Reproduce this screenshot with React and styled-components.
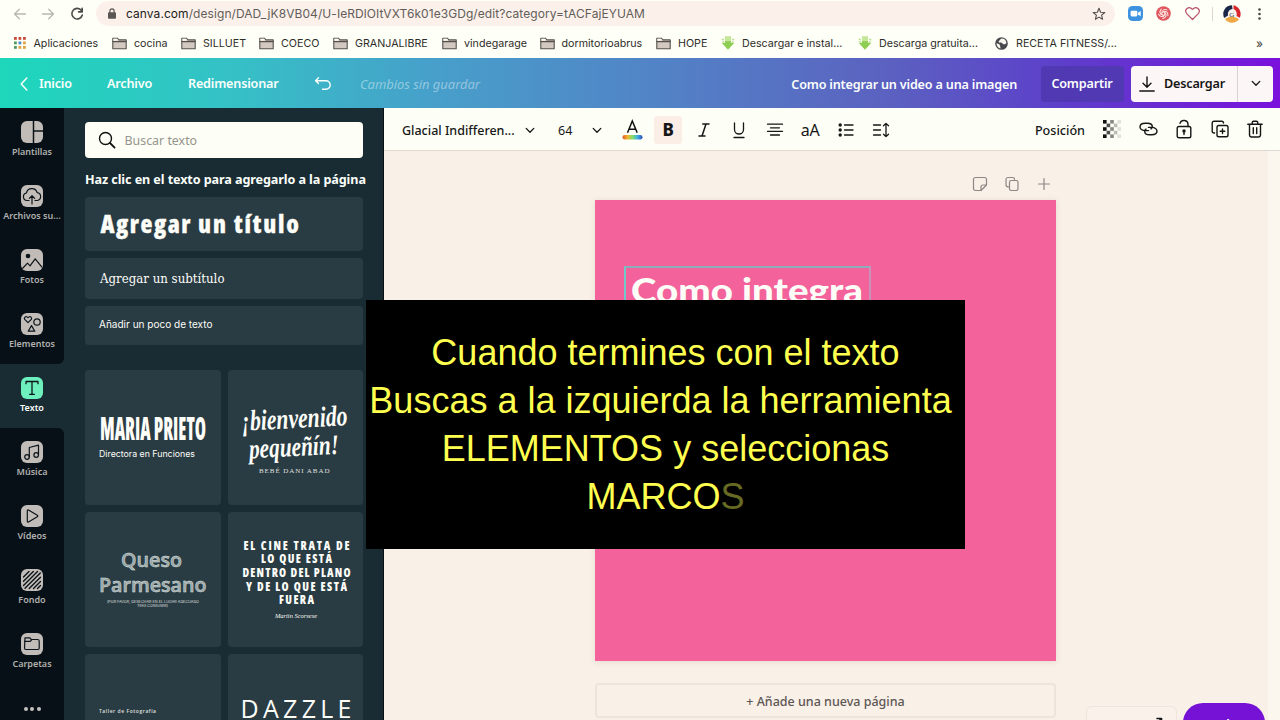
import React from 'react';
import styled, { createGlobalStyle, css } from 'styled-components';

const GlobalStyle = createGlobalStyle`
  * { box-sizing: border-box; }
  html, body { margin: 0; padding: 0; overflow: hidden; }
  body { font-family: 'Noto Sans', 'Open Sans', sans-serif; }
  svg { display: block; flex: none; overflow: visible; }
`;

const bookmarks = [
  { label: 'cocina', width: 69 },
  { label: 'SILLUET', width: 78 },
  { label: 'COECO', width: 74 },
  { label: 'GRANJALIBRE', width: 109 },
  { label: 'vindegarage', width: 97.5 },
  { label: 'dormitorioabrus', width: 116.5 },
  { label: 'HOPE', width: 65 },
];

const railItems = [
  { label: 'Plantillas', icon: 'templates' },
  { label: 'Archivos su...', icon: 'upload' },
  { label: 'Fotos', icon: 'photo' },
  { label: 'Elementos', icon: 'elements' },
  { label: 'Texto', icon: 'text', active: true },
  { label: 'Música', icon: 'music' },
  { label: 'Vídeos', icon: 'video' },
  { label: 'Fondo', icon: 'background' },
  { label: 'Carpetas', icon: 'folder' },
];

const quote = [
  ['EL CINE TRATA DE', 15.5, 106],
  ['LO QUE ESTÁ', 33, 71],
  ['DENTRO DEL PLANO', 14.5, 108],
  ['Y DE LO QUE ESTÁ', 18, 101],
  ['FUERA', 51, 35],
];

const Line = ({ size = 22, w, h, sw = 1.4, color = 'currentColor', children }) => (
  <svg width={w || size} height={h || size} viewBox={`0 0 ${w || size} ${h || size}`} fill="none" stroke={color} strokeWidth={sw} strokeLinecap="round" strokeLinejoin="round">
    {children}
  </svg>
);

const FolderIcon = () => (
  <Line w={15} h={13} sw={1.1} color="#55504c">
    <path d="M.8 11.8V1.2h4.6l1.3 1.7h7.5v8.9z" fill="#d3c9c1" />
    <path d="M.8 4.6h13.4" />
    <path d="M1.4 3.8V1.8h3.7l1.3 1.7" fill="#fdfdf4" stroke="none" />
  </Line>
);

const ArrowDown = () => (
  <svg width="14" height="16" viewBox="0 0 14 16">
    <path d="M4 2.200h6v5.600h3.400L7 14.800.6 7.800H4z" fill="#8fce52" />
    <path d="M4 1.200h6v5H4z" fill="#c4e79a" />
    <path d="M.8 4.500h2M11.200 4.500h2M1.500 6.600h1.500M11 6.600h1.500" stroke="#b5e088" strokeWidth="1.300" />
  </svg>
);

const Chevron = () => (
  <Line w={10} h={7} sw={1.3}>
    <path d="M1.200 1.400 5 5.300l3.800-3.900" />
  </Line>
);

const RailIcon = ({ name }) => {
  const shapes = {
    templates: <path d="M12.500-1v24M12.500 10h11" strokeWidth="1.500" />,
    upload: (
      <>
        <path d="M8 15.500H6a3.800 3.800 0 0 1-.6-7.500 5.600 5.600 0 0 1 10.800-.4A4 4 0 0 1 16.300 15.500H14" />
        <path d="M11 19v-8M8.300 13.300 11 10.600l2.700 2.700" />
      </>
    ),
    photo: (
      <>
        <circle cx="7" cy="7" r="1.700" fill="#0c141a" />
        <path d="m1.500 19.500 5-5.300 2.500 2.600 5.200-7 6.500 8" />
      </>
    ),
    elements: (
      <>
        <path d="M7 9.700 3.700 6.400a1.700 1.700 0 0 1 .3-2.300c1-.8 2.300-.4 3 .6.700-1 2-1.400 3-.6a1.700 1.700 0 0 1 .3 2.300z" />
        <circle cx="16" cy="9" r="3.200" />
        <path d="m10.500 12.600 3.300 5.600H7.200z" />
      </>
    ),
    text: <path d="M5 6.700V4.500h12v2.200M11 4.500v12.700M8.600 17.300h4.800" strokeWidth="1.300" />,
    music: (
      <>
        <circle cx="6" cy="16" r="2.300" />
        <circle cx="15.200" cy="14" r="2.300" />
        <path d="M8.300 16V6.500l9.200-2.300V14" />
      </>
    ),
    video: <path d="M6.300 5.700c0-.7.6-1 1.200-.7l8.800 5.300c.6.400.6 1 0 1.400l-8.800 5.300c-.6.300-1.200 0-1.200-.7z" />,
    background: <path d="M2.500 8 8 2.500M2.500 12.300l9.800-9.800M2.500 16.500l14-14M4 19.300 19.300 4M8.200 19.500 19.500 8.200M12.500 19.500l7-7M16.500 19.500l3-3" strokeWidth="1.400" />,
    folder: (
      <>
        <path d="M4 4.800h4.800l1.500 1.700h6.200c1 0 1.700.6 1.700 1.500v7.300c0 .7-.5 1.200-1.200 1.200H4.800c-.8 0-1.300-.5-1.300-1.200z" />
        <path d="M3.500 8.300h5.800l1.300-1.500" />
      </>
    ),
  };

  return (
    <Line color="#0c141a" sw={1.200}>
      {shapes[name]}
    </Line>
  );
};

// Text as it appears inside a design, stretched to the width of its box
const Art = ({ x, y, w, size, children, ...rest }) => (
  <text x={x} y={y} textLength={w} lengthAdjust="spacingAndGlyphs" fontSize={size} fill="#fdfdf8" {...rest}>
    {children}
  </text>
);

const Browser = () => (
  <Chrome>
    <AddressRow>
      <NavIcons>
        <Line size={14} sw={1.300} color="#b9b7b3"><path d="M12.500 7H1.500M6.300 2.200 1.500 7l4.800 4.800" /></Line>
        <Line size={14} sw={1.300} color="#b9b7b3"><path d="M1.500 7h11M7.700 2.200 12.500 7l-4.800 4.800" /></Line>
        <Line size={14} sw={1.600} color="#4b4a48"><path d="M11.500 3.600A5.300 5.300 0 1 0 12.300 8M12.200 1.300v3.600H8.600" /></Line>
      </NavIcons>
      <AddressBar>
        <svg width="8" height="11" viewBox="0 0 8 11"><rect y="4.200" width="8" height="6.500" rx="1" fill="#5a5653" /><path d="M1.900 5V3a2.100 2.100 0 0 1 4.200 0v2" fill="none" stroke="#5a5653" strokeWidth="1.200" /></svg>
        <Url><b>canva.com</b>/design/DAD_jK8VB04/U-IeRDlOItVXT6k01e3GDg/edit?category=tACFajEYUAM</Url>
        <Line size={14} sw={1.100} color="#504d4a"><path d="m7 1.300 1.600 3.900 4.200.3-3.200 2.700 1 4.100L7 10.100l-3.600 2.200 1-4.100L1.200 5.500l4.200-.3z" /></Line>
      </AddressBar>
      <Extensions>
        <svg width="15" height="15" viewBox="0 0 15 15"><rect width="15" height="15" rx="4.500" fill="#3d93e0" /><rect x="2.600" y="4.700" width="6.800" height="5.700" rx="1.300" fill="#fff" /><path d="m10 6.700 2.700-1.800v5.300L10 8.400z" fill="#fff" /></svg>
        <Line size={15} sw={1} color="#fff0ec">
          <circle cx="7.500" cy="7.500" r="7.300" fill="#e0575f" stroke="none" />
          <circle cx="7.500" cy="7.500" r="1.700" />
          {[0, 72, 144, 216, 288].map((angle) => (
            <path key={angle} d="M5.800 7C5.600 4.200 8 2.600 11 4" transform={`rotate(${angle} 7.5 7.5)`} />
          ))}
        </Line>
        <Line size={15} sw={1.200} color="#b8506f"><path d="M7.500 13.500 1.700 7.600c-3-3.600 2-8.500 5.800-4.200 3.800-4.300 8.800.6 5.800 4.200z" /></Line>
        <Separator />
        <svg width="18" height="18" viewBox="0 0 18 18">
          <circle cx="9" cy="9" r="8.800" fill="#f8f2ee" />
          <path d="M9 .2A8.800 8.800 0 0 0 1.200 13L5 10.500C4.500 7 6 4.500 9.500 4z" fill="#1c2748" />
          <path d="M10.500.300a8.800 8.800 0 0 1 6.300 12.400L13.500 11c1-3-.5-6-3-7z" fill="#d9262c" />
          <path d="M2 14.200c4-3.500 10-3.200 14 0A8.800 8.800 0 0 1 2 14.200z" fill="#f0a844" />
          <text x="6.300" y="11.500" fontSize="7" fontFamily="Liberation Serif, serif" fill="#333">G</text>
        </svg>
        <svg width="10" height="14" viewBox="0 0 10 14" fill="#4a4846"><circle cx="5.500" cy="2.500" r="1.300" /><circle cx="5.500" cy="7" r="1.300" /><circle cx="5.500" cy="11.500" r="1.300" /></svg>
      </Extensions>
    </AddressRow>
    <BookmarkRow>
      <Bookmark $w={78.500} $gap={8}>
        <svg width="12" height="12" viewBox="0 0 12 12">
          {['#c84c3c', '#c84c3c', '#c84c3c', '#4f9b62', '#4b86c9', '#e0a144', '#4f9b62', '#e0a144', '#e0a144'].map((color, i) => (
            <rect key={i} x={(i % 3) * 4.500} y={Math.floor(i / 3) * 4.500} width="2.800" height="2.800" fill={color} />
          ))}
        </svg>
        Aplicaciones
      </Bookmark>
      {bookmarks.map((item) => (
        <Bookmark key={item.label} $w={item.width}><FolderIcon />{item.label}</Bookmark>
      ))}
      <Bookmark $w={137}><ArrowDown />Descargar e instal...</Bookmark>
      <Bookmark $w={137}><ArrowDown />Descarga gratuita...</Bookmark>
      <Bookmark $w={140}>
        <svg width="14" height="13" viewBox="0 0 14 13"><circle cx="6.500" cy="6.500" r="6.300" fill="#46484b" /><path d="M7 1.500c-2 .2-1.500 1.700-3 2.200C3 4.200 4 6 5.500 5.600c2-.4 1.700 1.500 3 1.700 1.200.2 2.300-.3 3-1.300-.2-2.500-2-4.500-4.500-4.500zM1.500 6.500c1.500 0 3 .6 3.500 2 .3 1 .5 2 .5 3-2.300-.4-4-2.400-4-5z" fill="#f7f6ee" /></svg>
        RECETA FITNESS/...
      </Bookmark>
      <More>»</More>
    </BookmarkRow>
  </Chrome>
);

const Header = () => (
  <HeaderBar>
    <HeaderItem $w={87}>
      <Line w={8} h={14} sw={1.500}><path d="M6.800 1 1.200 7l5.600 6" /></Line>
      <span>Inicio</span>
    </HeaderItem>
    <HeaderItem $w={81}>Archivo</HeaderItem>
    <HeaderItem $w={126}>Redimensionar</HeaderItem>
    <HeaderItem $w={46}>
      <Line w={18} h={16} sw={1.400}><path d="M4.500 1.800 1.600 4.700l2.900 2.900M1.900 4.700h10a4.300 4.300 0 0 1 0 8.600H8.500" /></Line>
    </HeaderItem>
    <SaveState>Cambios sin guardar</SaveState>
    <DocTitle>Como integrar un video a una imagen</DocTitle>
    <ShareButton>Compartir</ShareButton>
    <DownloadGroup>
      <DownloadButton>
        <Line w={16} h={16} sw={1.400}><path d="M8 1v10M4 7.200l4 4 4-4M.8 15h14.400" /></Line>
        Descargar
      </DownloadButton>
      <DownloadMore><Chevron /></DownloadMore>
    </DownloadGroup>
  </HeaderBar>
);

const Sidebar = () => (
  <Rail>
    {railItems.map((item) => (
      <RailItem
        key={item.label}
        $active={item.active}
        $before={item.label === 'Elementos'}
        $after={item.label === 'Música'}
      >
        <RailTile $active={item.active}><RailIcon name={item.icon} /></RailTile>
        {item.label}
      </RailItem>
    ))}
    <RailMore><i /><i /><i /></RailMore>
  </Rail>
);

const TextPanel = () => (
  <Panel>
    <SearchBox>
      <Line size={18} sw={1.400} color="#111"><circle cx="7.500" cy="7.500" r="6" /><path d="m12 12 4.600 4.600" strokeWidth="1.800" /></Line>
      Buscar texto
    </SearchBox>
    <PanelTitle>Haz clic en el texto para agregarlo a la página</PanelTitle>
    <Preset $h={54}>
      <svg width="278" height="54" fontFamily="'Open Sans'" fontWeight="800" stroke="#fdfdf8" strokeWidth="0.3">
        <Art x={15.500} y={35.500} w={90} size={24.500} lengthAdjust="spacing" fontStretch="75%">Agregar</Art>
        <Art x={113} y={35.500} w={28} size={24.500} lengthAdjust="spacing" fontStretch="75%">un</Art>
        <Art x={149} y={35.500} w={65} size={24.500} lengthAdjust="spacing" fontStretch="75%">título</Art>
      </svg>
    </Preset>
    <Preset $h={41}>
      <svg width="278" height="41"><Art x={15} y={25} w={124.500} size={12.500} fontFamily="'DejaVu Serif'">Agregar un subtítulo</Art></svg>
    </Preset>
    <Preset $h={39}>
      <svg width="278" height="39"><Art x={14} y={22} w={113.500} size={10.400} fontFamily="Inter">Añadir un poco de texto</Art></svg>
    </Preset>
    <TemplateGrid>
      <Template>
        <svg width="135" height="135">
          <Art x={15} y={69.500} w={106} size={31} fontFamily="'Open Sans'" fontWeight="800" fontStretch="75%">MARIA PRIETO</Art>
          <Art x={14} y={87} w={96} size={8.500} fontFamily="Inter">Directora en Funciones</Art>
        </svg>
      </Template>
      <Template>
        <svg width="135" height="135">
          <g transform="rotate(-3 67 60)" fontFamily="'Liberation Serif'" fontStyle="italic" fontWeight="700">
            <Art x={14} y={58} w={106} size={29}>¡bienvenido</Art>
            <Art x={20} y={86} w={90} size={28}>pequeñín!</Art>
          </g>
          <Art x={31} y={103} w={70.500} size={7} lengthAdjust="spacing" fontFamily="'Liberation Serif'" opacity="0.85">BEBÉ DANI ABAD</Art>
        </svg>
      </Template>
      <Template>
        <svg width="135" height="135">
          <g fontFamily="'Open Sans'" fontWeight="600" fill="#98a2a3" stroke="#dfe4e2" strokeWidth="0.5">
            <Art x={36} y={54.500} w={61} size={20.500} fill="inherit">Queso</Art>
            <Art x={14} y={80} w={107.500} size={20.500} fill="inherit">Parmesano</Art>
          </g>
          <Art x={22} y={90.500} w={92} size={3.800} fontFamily="Inter" opacity="0.8">(POR FAVOR, DESECHAR EN EL LUGAR ADECUADO</Art>
          <Art x={52} y={95} w={31} size={3.800} fontFamily="Inter" opacity="0.8">TRAS CONSUMIR)</Art>
        </svg>
      </Template>
      <Template>
        <svg width="135" height="135">
          {quote.map(([line, x, w], i) => (
            <Art key={line} x={x} y={37.500 + i * 13.700} w={w} size={11.400} lengthAdjust="spacing" fontFamily="'Open Sans'" fontWeight="800" fontStretch="75%">{line}</Art>
          ))}
          <Art x={47} y={105.500} w={42} size={5.600} fontFamily="'Liberation Serif'" fontStyle="italic">Martin Scorsese</Art>
        </svg>
      </Template>
      <Template>
        <svg width="135" height="135"><Art x={14} y={59} w={57} size={5} lengthAdjust="spacing" fontFamily="'Open Sans'" fontWeight="600" opacity="0.85">Taller de Fotografía</Art></svg>
      </Template>
      <Template>
        <svg width="135" height="135"><Art x={12.500} y={64} w={111} size={25} lengthAdjust="spacing" fontFamily="'Open Sans'" fontStretch="90%">DAZZLE</Art></svg>
      </Template>
    </TemplateGrid>
  </Panel>
);

const EditorToolbar = () => (
  <Toolbar>
    <FontName>Glacial Indifferen...</FontName>
    <ToolCell $w={28}><Chevron /></ToolCell>
    <FontSize>64</FontSize>
    <ToolCell $w={36}><Chevron /></ToolCell>
    <ToolCell>
      <svg width="21" height="20" viewBox="0 0 21 20">
        <defs>
          <linearGradient id="rainbow">
            <stop offset="0" stopColor="#e2572e" /><stop offset="0.25" stopColor="#f1b62c" />
            <stop offset="0.5" stopColor="#83dd6e" /><stop offset="0.75" stopColor="#3fb0e6" /><stop offset="1" stopColor="#3450b4" />
          </linearGradient>
        </defs>
        <path d="M5.500 12.800 10.300 1l4.900 11.800M7 9.200h6.600" fill="none" stroke="#111" strokeWidth="1.500" />
        <rect x="0.500" y="15" width="20" height="4.500" rx="2.200" fill="url(#rainbow)" />
      </svg>
    </ToolCell>
    <ToolCell><BoldButton>B</BoldButton></ToolCell>
    <ToolCell><Line w={12} h={16} sw={1.500}><path d="M4.800 2H11M1 14h6M8 2 4 14" /></Line></ToolCell>
    <ToolCell><Line w={14} h={18} sw={1.300}><path d="M2.500 2v6.500a4.500 4.500 0 0 0 9 0V2M2 16.500h10" /></Line></ToolCell>
    <ToolCell><Line w={18} h={14} sw={1.300}><path d="M1.500 1.200h15M4.500 4.800h9M1.500 8.400h15M4.500 12h9" /></Line></ToolCell>
    <ToolCell><CaseLabel>aA</CaseLabel></ToolCell>
    <ToolCell>
      <Line w={16} h={16} sw={1.300}>
        <path d="M6.500 3H15M6.500 8H15M6.500 13H15" />
        <g fill="currentColor" stroke="none"><circle cx="2.200" cy="3" r="1.700" /><circle cx="2.200" cy="8" r="1.700" /><circle cx="2.200" cy="13" r="1.700" /></g>
      </Line>
    </ToolCell>
    <ToolCell><Line w={18} h={16} sw={1.300}><path d="M1.500 3h7M1.500 8h7M1.500 13h7M14 1.500v13M11.500 3.800 14 1.400l2.500 2.400M11.500 12.200l2.500 2.400 2.500-2.400" /></Line></ToolCell>
    <PositionLabel>Posición</PositionLabel>
    <ObjectTools>
      <ToolCell $w={36}>
        <svg width="18" height="18" viewBox="0 0 18 18">
          {[0, 1, 2, 3, 4].map((row) => [0, 1, 2, 3, 4].map((col) => (
            (row + col) % 2 === 0 && <rect key={`${row}-${col}`} x={col * 3.600} y={row * 3.600} width="3.600" height="3.600" fill="#111" opacity={[1, 0.75, 0.5, 0.28, 0.12][col]} />
          )))}
        </svg>
      </ToolCell>
      <ToolCell $w={36}>
        <Line w={19} h={14} sw={1.400}>
          <path d="M9.500 8.600H6.300C3.200 8.600 1 7 1 4.900s2.200-3.700 5.300-3.700h2c2.800 0 5 1.400 5 3.400 0 .9-.5 1.700-1.300 2.300" />
          <path d="M9.500 8.600H6.300C3.200 8.600 1 7 1 4.900s2.200-3.700 5.300-3.700h2c2.800 0 5 1.400 5 3.400 0 .9-.5 1.700-1.300 2.300" transform="rotate(180 9.5 7)" />
        </Line>
      </ToolCell>
      <ToolCell $w={36}><Line w={16} h={20} sw={1.400}><rect x="1.200" y="7.500" width="13.600" height="11.200" rx="1.800" /><path d="M4 4.300a4.100 4.100 0 0 1 8 1.400v1.800M8 13v2.500" /><circle cx="8" cy="12" r="1" fill="currentColor" /></Line></ToolCell>
      <ToolCell $w={35}><Line w={18} h={18} sw={1.400}><path d="M3.600 13H3a1.800 1.800 0 0 1-1.800-1.800V3A1.800 1.800 0 0 1 3 1.200h7.700A1.800 1.800 0 0 1 12.500 3" /><rect x="6" y="5.500" width="11" height="11.300" rx="1.800" /><path d="M11.500 8.900v4.600M9.200 11.200h4.600" /></Line></ToolCell>
      <ToolCell $w={36}><Line w={16} h={18} sw={1.400}><path d="M.8 4.200h14.400M5.200 4V2.800c0-1 .6-1.600 1.500-1.600h2.600c.9 0 1.500.6 1.500 1.600V4M2.500 4.500v10.300c0 1.300.9 2.200 2.200 2.200h6.600c1.300 0 2.200-.9 2.200-2.200V4.500M6.300 7.800v5.700M9.700 7.800v5.700" /></Line></ToolCell>
    </ObjectTools>
  </Toolbar>
);

const Workspace = () => (
  <Stage>
    <PageColumn>
      <PageActions>
        <Line size={16} sw={1.200}><path d="M9 14.500H3.500c-1.200 0-2-.8-2-2v-9c0-1.200.8-2 2-2h9c1.200 0 2 .8 2 2V9L9 14.500V11c0-1.200.8-2 2-2h3.500" /></Line>
        <Line size={16} sw={1.200}><path d="M4.500 10.800H4c-1.200 0-2-.8-2-2V3.500c0-1.200.8-2 2-2h4.500c1.200 0 2 .7 2 1.800" /><rect x="5.500" y="4.500" width="8.500" height="10" rx="1.700" /></Line>
        <Line size={16} sw={1.200}><path d="M8 2.500v11M2.500 8h11" /></Line>
      </PageActions>
      <Page>
        <TextSelection>
          <svg width="240" height="60">
            <Art x={5} y={34.500} w={232} size={35} fontFamily="Lato" fontWeight="900">Como integra</Art>
          </svg>
        </TextSelection>
      </Page>
      <AddPage>+ Añade una nueva página</AddPage>
    </PageColumn>
    <ScrollTrack />
    <ZoomBox>
      <span>29 %</span>
      <Line size={12} sw={1.600}><path d="M6 1.500h4.500V6M10.500 1.500 1.500 10.500M1.500 6v4.500H6" /></Line>
    </ZoomBox>
    <HelpPill>Ayuda <b>?</b></HelpPill>
  </Stage>
);

const App = () => (
  <Window>
    <GlobalStyle />
    <Browser />
    <Header />
    <Body>
      <Sidebar />
      <TextPanel />
      <Editor>
        <EditorToolbar />
        <Workspace />
      </Editor>
    </Body>
    <Caption>
      <p>Cuando termines con el texto</p>
      <CaptionLine>Buscas a la izquierda la herramienta</CaptionLine>
      <p>ELEMENTOS y seleccionas</p>
      <p>MARCO<span>S</span></p>
    </Caption>
  </Window>
);

const Window = styled.div`
  position: relative;
  display: flex;
  flex-direction: column;
  width: 1280px;
  height: 720px;
  overflow: hidden;
  white-space: nowrap;
  background: #fefff6;
`;

const Chrome = styled.div`
  height: 58px;
  font-family: Inter, 'Liberation Sans', sans-serif;
  color: #3a3937;
`;

const AddressRow = styled.div`
  display: flex;
  align-items: center;
  height: 27px;
`;

const NavIcons = styled.div`
  display: flex;
  gap: 14.5px;
  width: 96px;
  padding-left: 12.5px;
`;

const AddressBar = styled.div`
  display: flex;
  align-items: center;
  width: 1019px;
  height: 25px;
  padding: 0 9px 0 12px;
  border-radius: 13px;
  background: #fcf1ea;
`;

const Url = styled.span`
  flex: 1;
  margin-left: 10px;
  font-size: 12px;
  letter-spacing: 0.07px;
  color: #625d5a;

  b {
    font-weight: 400;
    color: #1c1b1a;
  }
`;

const Extensions = styled.div`
  display: flex;
  align-items: center;
  padding-left: 12.5px;
  gap: 13.5px;
`;

const Separator = styled.i`
  width: 1px;
  height: 14px;
  margin: 0 -4px 0 -1px;
  background: #dcd5cf;
`;

const BookmarkRow = styled.div`
  display: flex;
  align-items: center;
  height: 31px;
  padding: 1px 17px 0 13.5px;
`;

const Bookmark = styled.div`
  display: flex;
  flex: none;
  align-items: center;
  gap: ${({ $gap }) => $gap || 7}px;
  width: ${({ $w }) => $w}px;
  margin-right: ${({ $gap }) => ($gap ? 20 : 0)}px;
  font-size: 10.7px;
  color: #2e2d2b;
`;

const More = styled.span`
  margin-left: auto;
  font-size: 12px;
`;

const HeaderBar = styled.header`
  display: flex;
  align-items: center;
  height: 50px;
  padding: 1px 7px 0 20px;
  color: #fbfffc;
  font-size: 12.6px;
  font-weight: 600;
  letter-spacing: -0.18px;
  background: linear-gradient(90deg, #1dd7bb 0%, #35c1c6 18%, #479fca 34%, #5282c6 52%, #5b62c0 69%, #5d3fca 83%, #7a11dc 100%);
`;

const HeaderItem = styled.div`
  display: flex;
  flex: none;
  align-items: center;
  gap: 11px;
  width: ${({ $w }) => $w}px;
`;

const SaveState = styled.span`
  flex: 1;
  font-size: 13px;
  font-weight: 400;
  font-style: italic;
  letter-spacing: -0.05px;
  color: rgba(255, 255, 255, 0.42);
`;

const DocTitle = styled.span`
  margin-right: 24px;
  padding-top: 2px;
`;

const ShareButton = styled.div`
  display: flex;
  align-items: center;
  justify-content: center;
  width: 83px;
  height: 36px;
  margin-right: 7px;
  padding-right: 1px;
  border-radius: 4px;
  background: #5239b4;
`;

const DownloadGroup = styled.div`
  display: flex;
  width: 142px;
  height: 36px;
  border-radius: 4px;
  overflow: hidden;
  color: #151515;
  background: #fcf6f6;
`;

const DownloadButton = styled.div`
  display: flex;
  align-items: center;
  gap: 9px;
  width: 107px;
  padding-left: 8px;
  border-right: 1px solid #d9d1d3;
`;

const DownloadMore = styled.div`
  display: flex;
  flex: 1;
  align-items: center;
  justify-content: center;
`;

const Body = styled.div`
  display: flex;
  flex: 1;
  min-height: 0;
`;

const Rail = styled.nav`
  width: 64px;
  height: 612px;
  overflow: hidden;
  background: #192b33;
`;

const RailItem = styled.div`
  display: flex;
  flex-direction: column;
  align-items: center;
  gap: 1.5px;
  height: 64px;
  padding-top: 13px;
  font-size: 9px;
  line-height: 14px;
  font-weight: 600;
  color: ${({ $active }) => ($active ? '#fafffa' : '#b0b1ae')};
  background: ${({ $active }) => ($active ? '#192b33' : '#081017')};
  ${({ $before }) => $before && css`border-bottom-right-radius: 6px;`}
  ${({ $after }) => $after && css`border-top-right-radius: 6px;`}
`;

const RailTile = styled.div`
  width: 22px;
  height: 22px;
  border-radius: 6px;
  overflow: hidden;
  background: ${({ $active }) => ($active ? '#6df0bd' : '#c1bcb7')};
`;

const RailMore = styled.div`
  display: flex;
  justify-content: center;
  gap: 2.5px;
  height: 40px;
  padding-top: 22.5px;
  background: #081017;

  i {
    width: 4px;
    height: 4px;
    border-radius: 50%;
    background: #c3c1bd;
  }
`;

const Panel = styled.aside`
  width: 320px;
  height: 612px;
  padding: 14px 20px 0 21px;
  border-right: 1px solid #0a0f12;
  overflow: hidden;
  background: #192b33;
`;

const SearchBox = styled.div`
  display: flex;
  align-items: center;
  gap: 9px;
  height: 36px;
  padding-left: 12.5px;
  border-radius: 4px;
  font-size: 12.4px;
  color: #96948e;
  background: #fdfef5;
`;

const PanelTitle = styled.div`
  height: 39px;
  line-height: 43px;
  font-size: 12.6px;
  font-weight: 700;
  letter-spacing: -0.09px;
  color: #fbfffa;
`;

const Preset = styled.div`
  height: ${({ $h }) => $h}px;
  margin-bottom: 7px;
  border-radius: 4px;
  background: #293b43;
`;

const TemplateGrid = styled.div`
  display: grid;
  grid-template-columns: 135.5px 135.5px;
  grid-auto-rows: 135px;
  gap: 7px;
  margin-top: 25px;
`;

const Template = styled.div`
  border-radius: 4px;
  background: #293b43;
`;

const Editor = styled.main`
  display: flex;
  flex: 1;
  flex-direction: column;
`;

const Toolbar = styled.div`
  display: flex;
  align-items: center;
  height: 43px;
  padding: 2px 7px 0 18px;
  border-bottom: 1px solid #e0d9d2;
  font-size: 13px;
  color: #161616;
  background: #fdfff6;
`;

const ToolCell = styled.div`
  display: flex;
  flex: none;
  align-items: center;
  justify-content: center;
  width: ${({ $w }) => $w || 35.5}px;
`;

const ObjectTools = styled.div`
  display: flex;
  align-items: center;
  padding-bottom: 2px;
`;

const FontName = styled.span`
  width: 114px;
  font-size: 12.5px;
  font-weight: 500;
`;

const FontSize = styled.span`
  width: 35px;
  padding-left: 14px;
  font-size: 12.5px;
`;

const BoldButton = styled.div`
  width: 28px;
  height: 28px;
  border-radius: 3px;
  line-height: 28px;
  text-align: center;
  font-size: 17px;
  font-weight: 800;
  background: #faeee7;
`;

const CaseLabel = styled.span`
  font-size: 16px;
`;

const PositionLabel = styled.span`
  margin-left: auto;
  margin-right: 9px;
  font-size: 12.6px;
  font-weight: 500;
`;

const Stage = styled.section`
  position: relative;
  display: flex;
  flex: 1;
  background: #f9f0e8;
`;

const PageColumn = styled.div`
  width: 884px;
  padding: 25px 0 0 211px;
`;

const PageActions = styled.div`
  display: flex;
  justify-content: flex-end;
  gap: 16px;
  width: 456.5px;
  height: 24px;
  color: #8d8783;
`;

const Page = styled.div`
  width: 461px;
  height: 461px;
  padding: 66px 0 0 29px;
  background: #f4629b;
  box-shadow: 0 1px 6px rgba(120, 70, 60, 0.14);
`;

const TextSelection = styled.div`
  width: 247px;
  height: 80px;
  border: 2px solid #8aacbb;
  border-left-color: #6fc9cb;
  border-right-color: #c993b9;
`;

const AddPage = styled.div`
  display: flex;
  align-items: center;
  justify-content: center;
  width: 461px;
  height: 35px;
  margin-top: 22px;
  padding-top: 2px;
  border: 2px solid #eee4dc;
  border-radius: 4px;
  font-size: 12.5px;
  font-weight: 500;
  color: #5c5754;
`;

const ScrollTrack = styled.div`
  flex: 1;
  background: #fcf7ee;
`;

const ZoomBox = styled.div`
  position: absolute;
  left: 702px;
  top: 555px;
  display: flex;
  gap: 14px;
  width: 91px;
  height: 40px;
  padding: 10px 0 0 23px;
  border: 1px solid #efe5dd;
  border-radius: 6px;
  font-size: 12px;
  color: #161616;
  background: #faf2ea;
`;

const HelpPill = styled.div`
  position: absolute;
  left: 799px;
  top: 552px;
  width: 82px;
  height: 40px;
  padding-top: 11.5px;
  border-radius: 20px;
  text-align: center;
  font-size: 13px;
  font-weight: 600;
  color: #fff;
  background: #7612d6;

  b {
    margin-left: 3px;
  }
`;

const Caption = styled.div`
  position: absolute;
  left: 366px;
  top: 300px;
  width: 599px;
  height: 249px;
  padding-top: 29px;
  font-family: 'Liberation Sans', Arial, sans-serif;
  font-size: 36px;
  line-height: 48px;
  text-align: center;
  color: #ffff4f;
  background: #000;

  p {
    margin: 0;
  }

  span {
    color: #666a22;
  }
`;

const CaptionLine = styled.p`
  && {
    padding-right: 10px;
  }
`;

export default App;
